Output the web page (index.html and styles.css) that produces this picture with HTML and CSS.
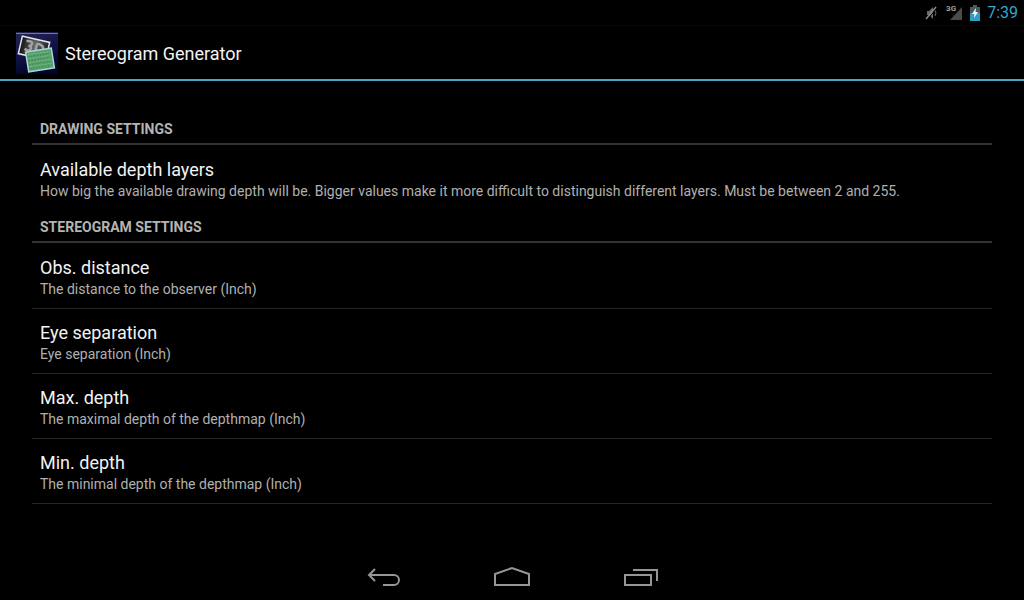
FILE: index.html
```html
<!DOCTYPE html>
<html lang="en">
  <head>
    <meta charset="UTF-8" />
    <meta name="viewport" content="width=device-width, initial-scale=1.0" />
    <title>Stereogram Generator</title>
    <link rel="stylesheet" href="styles.css">
  </head>

  <body>
    <!-- Status bar -->
    <div class="status-bar">
      <svg class="icon-mute" width="14" height="16" viewBox="0 0 14 16" aria-hidden="true">
        <path d="M2 6h2l4-4v12l-4-4H2z" fill="#6b6b6b" />
        <path d="M10 5q2 3 0 6" fill="none" stroke="#6b6b6b" />
        <path d="M2 15L12 3" stroke="#000" stroke-width="1" />
        <path d="M1 14L11 2" stroke="#8a8a8a" stroke-width="1.5" />
      </svg>
      <div class="signal">
        <span class="network">3G</span>
        <svg class="icon-signal" width="13" height="14" viewBox="0 0 13 14" aria-hidden="true">
          <path d="M12 0v13H0z" fill="#4a4a4a" />
        </svg>
      </div>
      <svg class="icon-battery" width="10" height="16" viewBox="0 0 10 16" aria-hidden="true">
        <path d="M3 0h4v2h3v6H0V2h3z" fill="#4c5a60" />
        <path d="M0 8h10v8H0z" fill="#2f9fc6" />
        <path d="M6 3L2 9h2.500L4 13l4-6H5.500z" fill="#fff" />
      </svg>
      <span class="clock">7:39</span>
    </div>

    <!-- Action bar -->
    <header class="action-bar">
      <svg class="app-icon" width="42" height="42" viewBox="0 0 42 42" aria-hidden="true">
        <defs>
          <linearGradient id="iconBg" x1="0" y1="0" x2="0.300" y2="1">
            <stop offset="0" stop-color="#25254e" />
            <stop offset="0.500" stop-color="#13134c" />
            <stop offset="1" stop-color="#03032a" />
          </linearGradient>
          <linearGradient id="photoBg" x1="0" y1="0" x2="1" y2="0">
            <stop offset="0" stop-color="#111" />
            <stop offset="0.500" stop-color="#666" />
            <stop offset="1" stop-color="#222" />
          </linearGradient>
        </defs>
        <rect width="42" height="42" fill="url(#iconBg)" />
        <path d="M0 1.500h42" stroke="#77779c" />
        <g transform="rotate(13 18 16)">
          <rect x="4" y="7" width="28" height="18" fill="url(#photoBg)" stroke="#e6e6ee" stroke-width="1.500" />
          <path d="M9 11q7-2 6 2q0 2-3 2q4 0 3 3q-1 3-6 1M20 11v9q7 0 7-5q0-4-7-4" fill="none" stroke="#a2a2a2" stroke-width="2.500" />
        </g>
        <g transform="rotate(-9 24 28)">
          <rect x="11" y="18" width="26" height="20" fill="#559f6a" stroke="#a9d4dc" stroke-width="1.500" />
          <path d="M13 21h22M13 25h22M13 29h22M13 33h22" stroke="#7cba82" stroke-dasharray="2 1" />
          <path d="M13 23h21M13 27h21M13 31h21M13 35h21" stroke="#35784c" stroke-dasharray="1 2" />
        </g>
      </svg>
      <h1 class="app-title">Stereogram Generator</h1>
    </header>

    <!-- Preferences -->
    <main class="preferences">
      <h2 class="category">Drawing settings</h2>
      <ul class="preference-list">
        <li>
          <button type="button" class="preference">
            <span class="title">Available depth layers</span>
            <span class="summary">How big the available drawing depth will be. Bigger values make it more difficult to distinguish different layers. Must be between 2 and 255.</span>
          </button>
        </li>
      </ul>

      <h2 class="category">Stereogram settings</h2>
      <ul class="preference-list divided">
        <li>
          <button type="button" class="preference">
            <span class="title">Obs. distance</span>
            <span class="summary">The distance to the observer (Inch)</span>
          </button>
        </li>
        <li>
          <button type="button" class="preference">
            <span class="title">Eye separation</span>
            <span class="summary">Eye separation (Inch)</span>
          </button>
        </li>
        <li>
          <button type="button" class="preference">
            <span class="title">Max. depth</span>
            <span class="summary">The maximal depth of the depthmap (Inch)</span>
          </button>
        </li>
        <li>
          <button type="button" class="preference">
            <span class="title">Min. depth</span>
            <span class="summary">The minimal depth of the depthmap (Inch)</span>
          </button>
        </li>
      </ul>
    </main>

    <!-- Navigation bar -->
    <nav class="nav-bar">
      <button type="button" class="nav-button" aria-label="Back">
        <svg width="36" height="24" viewBox="0 0 36 24">
          <path d="M9 3L3 9l6 6M3 9h25a5 5 0 0 1 0 10H17" />
        </svg>
      </button>
      <button type="button" class="nav-button" aria-label="Home">
        <svg width="36" height="24" viewBox="0 0 36 24">
          <path d="M1 19V8L18 2l17 6v11z" />
        </svg>
      </button>
      <button type="button" class="nav-button" aria-label="Recent apps">
        <svg width="36" height="24" viewBox="0 0 36 24">
          <path d="M3 9h26v10H3zM11 4h24v11" />
        </svg>
      </button>
    </nav>
  </body>
</html>
```

FILE: styles.css
```css
body {
  font-family: Roboto, sans-serif;
  background-color: #000;
  color: #f3f3f3;
  margin: 0;
  min-height: 100vh;
  display: flex;
  flex-direction: column;
}

button {
  background: none;
  border: none;
  color: inherit;
  font-family: inherit;
  cursor: pointer;
}

/* Status bar */
.status-bar {
  display: flex;
  justify-content: flex-end;
  align-items: center;
  gap: 7px;
  height: 25px;
  padding-right: 6px;
  border-bottom: 1px solid #080808;
}

.signal {
  display: flex;
  align-items: flex-end;
  height: 16px;
}

.icon-signal {
  margin-left: -6px;
}

.network {
  align-self: flex-start;
  color: #a0a0a0;
  font-size: 8px;
  font-weight: bold;
  line-height: 8px;
}

.clock {
  color: #33a5d0;
  font-size: 16px;
  line-height: 24px;
}

/* Action bar */
.action-bar {
  display: flex;
  align-items: center;
  gap: 7px;
  height: 53px;
  padding: 0 16px;
  border-bottom: 2px solid #4ba6c5;
}

.app-title {
  margin: 2px 0 0;
  font-size: 18px;
  font-weight: normal;
}

/* Preferences */
.preferences {
  flex: 1;
  padding: 31px 32px 0;
}

.category {
  margin: 0 0 1px;
  padding: 8px 8px 5px;
  border-bottom: 2px solid #333;
  color: #b4b4b4;
  font-size: 14px;
  line-height: 18px;
  text-transform: uppercase;
}

.preference-list {
  list-style-type: none;
  margin: 0;
  padding: 0;
}

.divided li {
  border-bottom: 1px solid #262626;
}

.preference {
  display: block;
  width: 100%;
  padding: 12px 8px 10px;
  text-align: left;
}

.preference:hover {
  background-color: #0d2d3a;
}

.title,
.summary {
  display: block;
}

.title {
  font-size: 18px;
  line-height: 24px;
}

.summary {
  color: #b0b0b0;
  font-size: 14px;
  line-height: 18px;
}

/* Navigation bar */
.nav-bar {
  display: flex;
  justify-content: center;
  gap: 48px;
  height: 48px;
}

.nav-button {
  width: 80px;
  padding: 3px 0 0;
}

.nav-button svg {
  display: block;
  margin: 0 auto;
  fill: none;
  stroke: #969696;
  stroke-width: 2;
}
```
